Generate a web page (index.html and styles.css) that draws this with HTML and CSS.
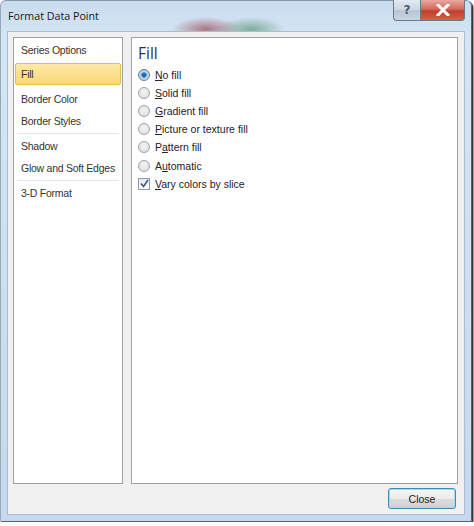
FILE: index.html
```html
<!DOCTYPE html>
<html>
<head>
<meta charset="utf-8">
<link rel="stylesheet" href="styles.css">
</head>
<body>
<div class="window">
  <div class="titlebar">
    <div class="title">Format Data Point</div>
    <div class="caption-buttons">
      <div class="cap help">?</div>
      <div class="cap close">
        <svg width="14" height="12" viewBox="0 0 14 12"><path d="M2 1 L12 11 M12 1 L2 11" stroke="#fff" stroke-width="3" stroke-linecap="square"/></svg>
      </div>
    </div>
  </div>
  <div class="client">
    <div class="panels">
      <div class="nav">
        <div class="nav-item">Series Options</div>
        <div class="nav-item selected">Fill</div>
        <div class="nav-item">Border Color</div>
        <div class="nav-item">Border Styles</div>
        <div class="sep"></div>
        <div class="nav-item">Shadow</div>
        <div class="nav-item">Glow and Soft Edges</div>
        <div class="sep"></div>
        <div class="nav-item">3-D Format</div>
      </div>
      <div class="content">
        <div class="heading">Fill</div>
        <div class="opt"><span class="radio checked"></span><span><u>N</u>o fill</span></div>
        <div class="opt"><span class="radio"></span><span><u>S</u>olid fill</span></div>
        <div class="opt"><span class="radio"></span><span><u>G</u>radient fill</span></div>
        <div class="opt"><span class="radio"></span><span><u>P</u>icture or texture fill</span></div>
        <div class="opt"><span class="radio"></span><span>P<u>a</u>ttern fill</span></div>
        <div class="opt"><span class="radio"></span><span>A<u>u</u>tomatic</span></div>
        <div class="opt"><span class="check"><svg width="9" height="9" viewBox="0 0 9 9"><path d="M1 4.5 L3.5 7.5 L8 1" fill="none" stroke="#3a5a8c" stroke-width="1.6"/></svg></span><span><u>V</u>ary colors by slice</span></div>
      </div>
    </div>
    <div class="footer">
      <button class="btn">Close</button>
    </div>
  </div>
</div>
</body>
</html>
```
FILE: styles.css
```css
* { box-sizing: border-box; }
html, body { margin: 0; padding: 0; background: #ffffff; }
body { font-family: "Liberation Sans", Arial, sans-serif; font-size: 10.5px; color: #1e1e1e; }

.window {
  width: 472px;
  height: 522px;
  border: 1px solid #55606c;
  border-top-color: #8a96a4;
  border-left-color: #9aa8b6;
  border-radius: 6px 6px 2px 2px;
  background:
    radial-gradient(ellipse 34px 12px at 205px 28px, rgba(150,60,70,0.65), rgba(150,60,70,0) 100%),
    radial-gradient(ellipse 34px 12px at 250px 28px, rgba(70,140,90,0.6), rgba(70,140,90,0) 100%),
    linear-gradient(to bottom, #c9dcef 0px, #d6e5f4 40px, #c4d9ee 100%);
  padding: 0 6px 6px 6px;
  display: flex;
  flex-direction: column;
  box-shadow: 1px 1px 0 #3a3a3a, 2px 2px 0 #9a9a9a;
}

.titlebar {
  height: 30px;
  display: flex;
  justify-content: space-between;
  align-items: flex-start;
  flex: none;
}
.title {
  font-family: "Open Sans", "Liberation Sans", sans-serif;
  font-size: 10.7px;
  color: #1a1a1a;
  padding-top: 8px;
  padding-left: 1px;
}
.caption-buttons {
  display: flex;
  margin-top: -1px;
}
.cap {
  height: 21px;
  border: 1px solid #6d7886;
  border-top: none;
  display: flex;
  align-items: center;
  justify-content: center;
}
.help {
  width: 27px;
  border-radius: 0 0 0 4px;
  border-right: none;
  background: linear-gradient(to bottom, #e2e9f1 0%, #ccd7e3 50%, #b7c5d4 51%, #c9d6e2 100%);
  color: #4d5966;
  font-family: "DejaVu Sans", sans-serif;
  font-weight: bold;
  font-size: 12px;
}
.close {
  width: 45px;
  border-radius: 0 0 4px 0;
  background: linear-gradient(to bottom, #e7a9a0 0%, #d46a5c 45%, #c23d2d 55%, #d2604a 100%);
}

.client {
  flex: 1;
  background: #f0f0f0;
  border: 1px solid #a9bdd2;
  display: flex;
  flex-direction: column;
  padding: 5px 6px 5px 5px;
}
.panels {
  display: flex;
  gap: 8px;
  height: 447px;
}
.nav {
  width: 110px;
  background: #ffffff;
  border: 1px solid #a0a0a0;
  padding: 1px 1px;
  display: flex;
  flex-direction: column;
}
.nav-item {
  height: 22px;
  line-height: 20px;
  padding: 0 5px;
  border: 1px solid transparent;
  border-radius: 2px;
  color: #333;
  white-space: nowrap;
  letter-spacing: -0.25px;
}
.nav-item.selected {
  margin: 2px 0 3px;
  background: linear-gradient(to bottom, #fde9a8 0%, #fbd877 100%);
  border-color: #e8bd4f;
}
.sep {
  height: 1px;
  background: #e6e6e6;
  margin: 1px 2px;
}
.content {
  flex: 1;
  background: #ffffff;
  border: 1px solid #a0a0a0;
  padding: 2px 6px;
}
.heading {
  font-family: "Open Sans", "Liberation Sans", sans-serif;
  font-size: 15.5px;
  color: #333;
  height: 26px;
  line-height: 26px;
}
.opt {
  display: flex;
  align-items: center;
  height: 18.1px;
  gap: 5px;
  color: #222;
}
.radio {
  width: 12px;
  height: 12px;
  border-radius: 50%;
  border: 1px solid #9ea4ab;
  background: radial-gradient(circle at 50% 40%, #f4f4f4 0%, #d8dbde 100%);
  flex: none;
}
.radio.checked {
  border-color: #5a7a9a;
  background: radial-gradient(circle at 50% 50%, #1e6ab4 0%, #1e6ab4 28%, #aec8e0 42%, #e8eef4 100%);
}
.check {
  width: 12px;
  height: 12px;
  border: 1px solid #8e9aa6;
  background: linear-gradient(to bottom, #e6eaee, #ffffff);
  flex: none;
  display: flex;
  align-items: center;
  justify-content: center;
}

.footer {
  display: flex;
  justify-content: flex-end;
  padding-top: 4px;
  padding-right: 2px;
}
.btn {
  width: 68px;
  height: 21px;
  font-family: "Liberation Sans", Arial, sans-serif;
  font-size: 10.5px;
  color: #222;
  border: 1px solid #3c8cb4;
  border-radius: 3px;
  background: linear-gradient(to bottom, #f6f6f6 0%, #ebebeb 50%, #dcdcdc 51%, #d2d2d2 100%);
  box-shadow: inset 0 0 0 1px #9fdcef;
  padding: 0;
}
```
